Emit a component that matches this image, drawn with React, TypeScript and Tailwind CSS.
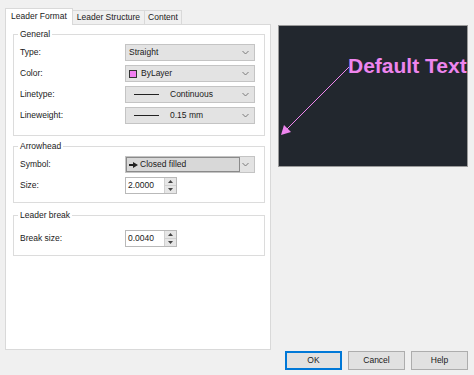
import React from "react";

const Chevron = () => (
  <svg width="7" height="5" viewBox="0 0 7 5" className="shrink-0">
    <path d="M0.5 1 L3.5 4 L6.5 1" fill="none" stroke="#7a7a7a" strokeWidth="1" />
  </svg>
);

const Combo = ({ children }: { children: React.ReactNode }) => (
  <div className="flex h-[17px] w-[130px] items-center border border-[#c4c4c4] bg-[#e3e3e3] pl-[3px] pr-[5px]">
    <div className="flex flex-1 items-center">{children}</div>
    <Chevron />
  </div>
);

const Spin = ({ value }: { value: string }) => (
  <div className="flex h-[17px] w-[52px] border border-[#b9b9b9] bg-white">
    <div className="flex flex-1 items-center pl-[2px]">{value}</div>
    <div className="flex w-[12px] flex-col border-l border-[#d0d0d0] bg-[#e6e6e6]">
      <div className="flex flex-1 items-center justify-center border-b border-[#d0d0d0]">
        <svg width="5" height="3" viewBox="0 0 5 3"><path d="M0 3 L2.5 0 L5 3 Z" fill="#444" /></svg>
      </div>
      <div className="flex flex-1 items-center justify-center">
        <svg width="5" height="3" viewBox="0 0 5 3"><path d="M0 0 L2.5 3 L5 0 Z" fill="#444" /></svg>
      </div>
    </div>
  </div>
);

const Row = ({ label, children }: { label: string; children: React.ReactNode }) => (
  <div className="flex items-center">
    <div className="w-[105px]">{label}</div>
    {children}
  </div>
);

const Group = ({
  title,
  children,
  className,
}: {
  title: string;
  children: React.ReactNode;
  className: string;
}) => (
  <fieldset className={"border border-[#dcdcdc] pl-[6px] " + className}>
    <legend className="-ml-[2px] px-[2px] leading-[10px]">{title}</legend>
    {children}
  </fieldset>
);

export default function App() {
  return (
    <div className="flex h-[375px] w-[474px] flex-col bg-[#f0f0f0] pt-[8px] font-['Liberation_Sans',Arial,sans-serif] text-[8.5px] text-[#1a1a1a]">
      <div className="flex">
        <div className="ml-[5px] flex w-[266px] flex-col">
          <div className="flex h-[16px] items-end">
            <div className="relative z-10 -mb-px flex h-[17px] items-center border border-b-0 border-[#d9d9d9] bg-white px-[5px] pb-[1px]">
              Leader Format
            </div>
            <div className="flex h-[14px] items-center border border-b-0 border-l-0 border-[#d9d9d9] bg-[#f0f0f0] px-[4px]">
              Leader Structure
            </div>
            <div className="flex h-[14px] items-center border border-b-0 border-l-0 border-[#d9d9d9] bg-[#f0f0f0] px-[3px]">
              Content
            </div>
          </div>
          <div className="flex h-[326px] flex-col border border-[#d9d9d9] bg-white pl-[7px] pr-[5px] pt-[4px]">
            <Group title="General" className="pb-[11px] pt-[5px]">
              <div className="flex flex-col gap-[4px]">
                <Row label="Type:">
                  <Combo>Straight</Combo>
                </Row>
                <Row label="Color:">
                  <Combo>
                    <span className="mr-[4px] h-[8px] w-[8px] border border-[#333] bg-[#f07ef0]" />
                    ByLayer
                  </Combo>
                </Row>
                <Row label="Linetype:">
                  <Combo>
                    <span className="ml-[5px] mr-[11px] h-px w-[25px] bg-[#222]" />
                    Continuous
                  </Combo>
                </Row>
                <Row label="Lineweight:">
                  <Combo>
                    <span className="ml-[5px] mr-[11px] h-px w-[25px] bg-[#222]" />
                    0.15 mm
                  </Combo>
                </Row>
              </div>
            </Group>
            <Group title="Arrowhead" className="mt-[5px] pb-[8px] pt-[5px]">
              <div className="flex flex-col gap-[4px]">
                <Row label="Symbol:">
                  <div className="flex h-[17px] w-[130px] items-center border border-[#c4c4c4] bg-[#e3e3e3] pr-[5px]">
                    <div className="flex h-full w-[114px] items-center border border-[#8a8a8a] bg-[#d8d8d8] pl-[2px]">
                      <svg width="9" height="6" viewBox="0 0 9 6" className="mr-[2px]">
                        <path d="M0 2 H4 V0 L9 3 L4 6 V4 H0 Z" fill="#222" />
                      </svg>
                      Closed filled
                    </div>
                    <div className="flex flex-1 justify-end">
                      <Chevron />
                    </div>
                  </div>
                </Row>
                <Row label="Size:">
                  <Spin value="2.0000" />
                </Row>
              </div>
            </Group>
            <Group title="Leader break" className="mt-[7px] pb-[8px] pt-[10px]">
              <Row label="Break size:">
                <Spin value="0.0040" />
              </Row>
            </Group>
          </div>
        </div>
        <div className="relative ml-[7px] mt-[17px] h-[142px] w-[190px] overflow-hidden border border-[#9a9a9a] bg-[#22272e]">
          <div className="absolute left-[69px] top-[27px] whitespace-nowrap text-[21px] font-bold leading-[26px] text-[#ee85ee]">
            Default Text
          </div>
          <svg width="190" height="142" className="absolute left-0 top-0">
            <line x1="70" y1="41" x2="6" y2="105" stroke="#ee85ee" strokeWidth="1" />
            <path d="M2 109 L5 99 L12 106 Z" fill="#ee85ee" />
          </svg>
        </div>
      </div>
      <div className="mt-[1px] flex justify-end gap-[6px] pr-[6px]">
        <div className="flex h-[19px] w-[57px] items-center justify-center border-2 border-[#0078d7] bg-[#e1e1e1]">
          OK
        </div>
        <div className="flex h-[19px] w-[57px] items-center justify-center border border-[#adadad] bg-[#e1e1e1]">
          Cancel
        </div>
        <div className="flex h-[19px] w-[57px] items-center justify-center border border-[#adadad] bg-[#e1e1e1]">
          Help
        </div>
      </div>
    </div>
  );
}
